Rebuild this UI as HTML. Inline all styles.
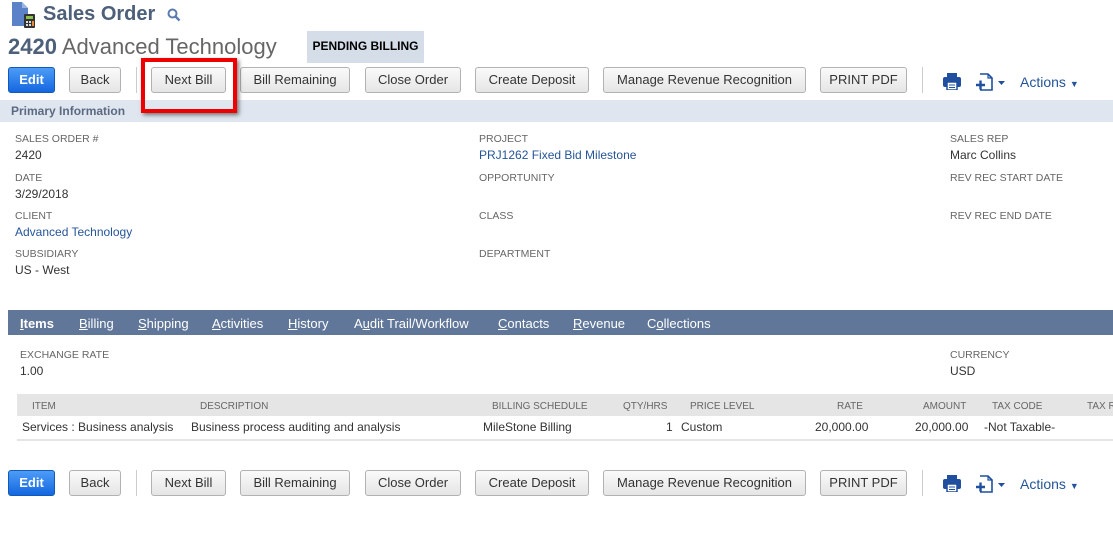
<!DOCTYPE html>
<html><head><meta charset="utf-8"><style>
*{margin:0;padding:0;box-sizing:border-box}
body{width:1113px;height:546px;background:#fff;font-family:"Liberation Sans",sans-serif;position:relative;overflow:hidden;color:#333}
.a{position:absolute;white-space:nowrap}
.btn{position:absolute;height:26px;border:1px solid #b2b2b2;border-radius:3px;background:linear-gradient(#fafafa,#e5e5e5);font-size:13px;color:#333;text-align:center;line-height:24px}
.edit{background:linear-gradient(#4d9cf8,#1467e0);border-color:#125ab8;color:#fff;font-weight:bold}
.sep{position:absolute;width:1px;height:26px;background:#ccc}
.lab{position:absolute;font-size:10.5px;color:#666;white-space:nowrap}
.val{position:absolute;font-size:12px;color:#333;white-space:nowrap}
.lnk{color:#255599}
.tab{position:absolute;top:316px;font-size:13px;color:#fff;white-space:nowrap}
.th{position:absolute;top:401px;font-size:10px;color:#666;white-space:nowrap}
.td{position:absolute;top:420px;font-size:12px;color:#333;white-space:nowrap}
.act{position:absolute;font-size:14px;color:#255599}
</style></head><body>
<svg class="a" style="left:10px;top:2px" width="28" height="26" viewBox="0 0 28 26"><path d="M2 0h10l6 6v18H2z" fill="#5b82c8"/><path d="M12 0v6h6" fill="#9bb3e0"/><rect x="14" y="12" width="11" height="14" rx="1" fill="#333"/><rect x="16" y="14" width="7" height="3" fill="#8bc34a"/><g fill="#ddd"><rect x="16" y="19" width="2" height="2"/><rect x="19" y="19" width="2" height="2"/><rect x="16" y="22" width="2" height="2"/><rect x="19" y="22" width="2" height="2"/></g><rect x="22" y="19" width="2" height="5" fill="#e8893a"/></svg>
<div class="a" style="left:43px;top:3px;font-size:20px;font-weight:bold;color:#4d5f79">Sales Order</div>
<svg class="a" style="left:167px;top:8px" width="14" height="14" viewBox="0 0 14 14"><circle cx="5.5" cy="5.5" r="4" fill="none" stroke="#5b7bb0" stroke-width="2"/><path d="M8.5 8.5l4 4" stroke="#5b7bb0" stroke-width="2.4"/></svg>
<div class="a" style="left:8px;top:34px;font-size:22px;color:#666"><b style="color:#4d5f79">2420</b> Advanced Technology</div>
<div class="a" style="left:307px;top:31px;width:117px;height:32px;background:#d5dde9;font-size:12px;font-weight:bold;color:#000;line-height:31px;text-align:center">PENDING BILLING</div>

<div class="a" style="left:0;top:100px;width:1113px;height:22px;background:#e0e6ef"></div>
<div class="a" style="left:11px;top:104px;font-size:12px;font-weight:bold;color:#5a6a82">Primary Information</div>

<div class="btn edit" style="left:8px;top:67px;width:47px">Edit</div>
<div class="btn" style="left:69px;top:67px;width:52px">Back</div>
<div class="sep" style="left:136px;top:67px"></div>
<div class="btn" style="left:151px;top:67px;width:75px">Next Bill</div>
<div class="btn" style="left:240px;top:67px;width:110px">Bill Remaining</div>
<div class="btn" style="left:365px;top:67px;width:96px">Close Order</div>
<div class="btn" style="left:475px;top:67px;width:114px">Create Deposit</div>
<div class="btn" style="left:603px;top:67px;width:203px">Manage Revenue Recognition</div>
<div class="btn" style="left:820px;top:67px;width:87px">PRINT PDF</div>
<div class="sep" style="left:922px;top:67px"></div>
<svg class="a" style="left:943px;top:73px" width="18" height="17" viewBox="0 0 18 17"><rect x="4" y="0" width="10" height="5" fill="#1f4f9e"/><rect x="0" y="4" width="18" height="10" rx="2" fill="#1f4f9e"/><rect x="4" y="9" width="10" height="8" fill="#fff" stroke="#1f4f9e" stroke-width="1.5"/><path d="M6 12h6M6 14.5h6" stroke="#1f4f9e"/></svg>
<svg class="a" style="left:975px;top:72px" width="32" height="20" viewBox="0 0 32 20"><path d="M5 2h8l4 4v12H5" fill="none" stroke="#1f4f9e" stroke-width="1.6"/><path d="M13 2v4h4" fill="none" stroke="#1f4f9e" stroke-width="1.2"/><path d="M1 13h9M5.5 8.5v9" stroke="#1f4f9e" stroke-width="2.4"/><path d="M23 9h7l-3.5 4z" fill="#1f4f9e"/></svg>
<div class="act" style="left:1020px;top:74px">Actions <span style="font-size:9px">▼</span></div>

<div class="a" style="left:141px;top:58px;width:96px;height:55px;border:4px solid #e00;box-shadow:2px 2px 4px rgba(0,0,0,.5)"></div>

<div class="lab" style="left:15px;top:133px">SALES ORDER #</div><div class="val" style="left:15px;top:148px">2420</div>
<div class="lab" style="left:15px;top:172px">DATE</div><div class="val" style="left:15px;top:187px">3/29/2018</div>
<div class="lab" style="left:15px;top:210px">CLIENT</div><div class="val lnk" style="left:15px;top:225px">Advanced Technology</div>
<div class="lab" style="left:15px;top:248px">SUBSIDIARY</div><div class="val" style="left:15px;top:263px">US - West</div>
<div class="lab" style="left:479px;top:133px">PROJECT</div><div class="val lnk" style="left:479px;top:148px">PRJ1262 Fixed Bid Milestone</div>
<div class="lab" style="left:479px;top:172px">OPPORTUNITY</div>
<div class="lab" style="left:479px;top:210px">CLASS</div>
<div class="lab" style="left:479px;top:248px">DEPARTMENT</div>
<div class="lab" style="left:950px;top:133px">SALES REP</div><div class="val" style="left:950px;top:148px">Marc Collins</div>
<div class="lab" style="left:950px;top:172px">REV REC START DATE</div>
<div class="lab" style="left:950px;top:210px">REV REC END DATE</div>

<div class="a" style="left:8px;top:310px;width:1105px;height:25px;background:#607799"></div>
<div class="tab" style="left:20px;font-weight:bold"><u>I</u>tems</div>
<div class="a" style="left:31px;top:330px;width:0;height:0;border:5px solid transparent;border-bottom-color:#fff"></div>
<div class="tab" style="left:79px"><u>B</u>illing</div>
<div class="tab" style="left:138px"><u>S</u>hipping</div>
<div class="tab" style="left:212px"><u>A</u>ctivities</div>
<div class="tab" style="left:288px"><u>H</u>istory</div>
<div class="tab" style="left:354px">A<u>u</u>dit Trail/Workflow</div>
<div class="tab" style="left:498px"><u>C</u>ontacts</div>
<div class="tab" style="left:573px"><u>R</u>evenue</div>
<div class="tab" style="left:647px">C<u>o</u>llections</div>

<div class="lab" style="left:20px;top:349px">EXCHANGE RATE</div><div class="val" style="left:20px;top:364px">1.00</div>
<div class="lab" style="left:950px;top:349px">CURRENCY</div><div class="val" style="left:950px;top:364px">USD</div>

<div class="a" style="left:17px;top:394px;width:1096px;height:22px;background:#e5e5e5"></div>
<div class="a" style="left:17px;top:439px;width:1096px;height:2px;background:#e5e5e5"></div>
<div class="th" style="left:32px">ITEM</div>
<div class="th" style="left:200px">DESCRIPTION</div>
<div class="th" style="left:492px">BILLING SCHEDULE</div>
<div class="th" style="left:623px">QTY/HRS</div>
<div class="th" style="left:690px">PRICE LEVEL</div>
<div class="th" style="left:837px">RATE</div>
<div class="th" style="left:923px">AMOUNT</div>
<div class="th" style="left:992px">TAX CODE</div>
<div class="th" style="left:1087px">TAX R</div>
<div class="td lnk" style="left:22px">Services : Business analysis</div>
<div class="td" style="left:191px">Business process auditing and analysis</div>
<div class="td lnk" style="left:483px">MileStone Billing</div>
<div class="td" style="left:666px">1</div>
<div class="td" style="left:681px">Custom</div>
<div class="td" style="left:815px">20,000.00</div>
<div class="td" style="left:915px">20,000.00</div>
<div class="td" style="left:984px">-Not Taxable-</div>

<div class="btn edit" style="left:8px;top:470px;width:47px">Edit</div>
<div class="btn" style="left:69px;top:470px;width:52px">Back</div>
<div class="sep" style="left:136px;top:470px"></div>
<div class="btn" style="left:151px;top:470px;width:75px">Next Bill</div>
<div class="btn" style="left:240px;top:470px;width:110px">Bill Remaining</div>
<div class="btn" style="left:365px;top:470px;width:96px">Close Order</div>
<div class="btn" style="left:475px;top:470px;width:114px">Create Deposit</div>
<div class="btn" style="left:603px;top:470px;width:203px">Manage Revenue Recognition</div>
<div class="btn" style="left:820px;top:470px;width:87px">PRINT PDF</div>
<div class="sep" style="left:922px;top:470px"></div>
<svg class="a" style="left:943px;top:475px" width="18" height="17" viewBox="0 0 18 17"><rect x="4" y="0" width="10" height="5" fill="#1f4f9e"/><rect x="0" y="4" width="18" height="10" rx="2" fill="#1f4f9e"/><rect x="4" y="9" width="10" height="8" fill="#fff" stroke="#1f4f9e" stroke-width="1.5"/><path d="M6 12h6M6 14.5h6" stroke="#1f4f9e"/></svg>
<svg class="a" style="left:975px;top:474px" width="32" height="20" viewBox="0 0 32 20"><path d="M5 2h8l4 4v12H5" fill="none" stroke="#1f4f9e" stroke-width="1.6"/><path d="M13 2v4h4" fill="none" stroke="#1f4f9e" stroke-width="1.2"/><path d="M1 13h9M5.5 8.5v9" stroke="#1f4f9e" stroke-width="2.4"/><path d="M23 9h7l-3.5 4z" fill="#1f4f9e"/></svg>
<div class="act" style="left:1020px;top:476px">Actions <span style="font-size:9px">▼</span></div>
</body></html>
